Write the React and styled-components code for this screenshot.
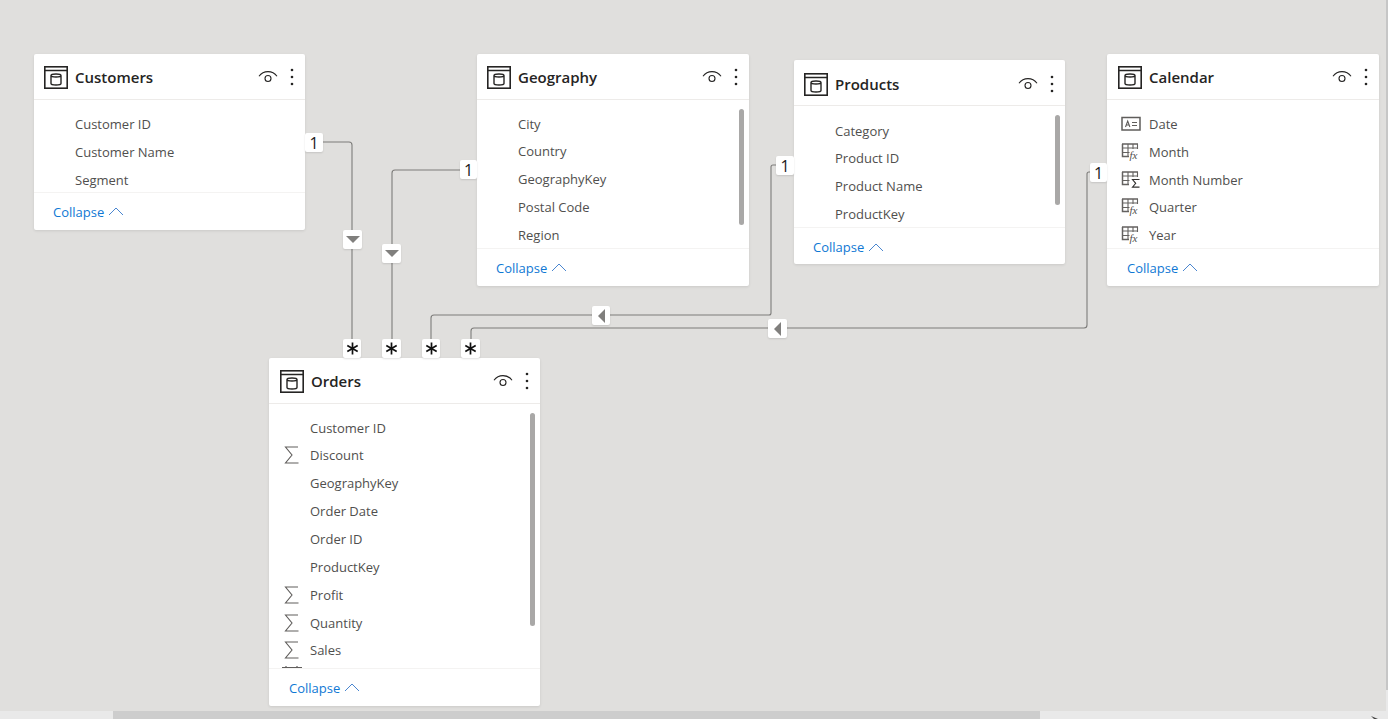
import React from "react";
import styled, { createGlobalStyle } from "styled-components";

const GlobalStyle = createGlobalStyle`
  html, body {
    margin: 0;
    padding: 0;
    overflow: hidden;
    background: #e0dfdd;
    font-family: "Open Sans", "Noto Sans", sans-serif;
  }
`;

const Page = styled.div`
  width: 1388px;
  height: 719px;
  display: flex;
  flex-direction: column;
  overflow: hidden;
`;

const Main = styled.div`
  flex: 1;
  display: flex;
  min-height: 0;
`;

const Canvas = styled.div`
  position: relative;
  flex: 1;
  background: #e0dfdd;
`;

const VScroll = styled.div`
  width: 2px;
  background: #e9e9e9;
  i {
    display: block;
    height: 690px;
    background: #c6c6c6;
  }
`;

const HScroll = styled.div`
  position: relative;
  height: 8px;
  background: #e9e9e9;
  padding-left: 113px;
  i {
    display: block;
    width: 927px;
    height: 8px;
    background: #cdcdcd;
  }
  svg {
    position: absolute;
    right: 10px;
    top: 5px;
  }
`;

const Lines = styled.svg`
  position: absolute;
  left: 0;
  top: 0;
  width: 1386px;
  height: 711px;
  fill: none;
  stroke: #7d7c7a;
  stroke-width: 1.1;
`;

const Card = styled.div`
  position: absolute;
  left: ${p => p.$x}px;
  top: ${p => p.$y}px;
  width: ${p => p.$w}px;
  height: ${p => p.$h}px;
  background: #fff;
  border-radius: 2px;
  box-shadow: 0 1px 3px rgba(0, 0, 0, 0.1);
  display: flex;
  flex-direction: column;
  overflow: hidden;
`;

const Header = styled.div`
  height: ${p => 44 - p.$drop}px;
  flex: none;
  display: flex;
  align-items: center;
  padding: ${p => 1 + p.$drop}px 8px 0 ${p => 10 + p.$inset}px;
  border-bottom: 1px solid #edebe9;
`;

const Title = styled.div`
  flex: 1;
  margin-left: 7px;
  font-size: 15px;
  font-weight: 600;
  color: #252423;
`;

const HeaderIcon = styled.svg`
  flex: none;
  display: block;
`;

const MoreDots = styled(HeaderIcon)`
  margin: 0 3px 0 12px;
`;

const Body = styled.div`
  position: relative;
  flex: 1;
  min-height: 0;
  overflow: hidden;
  padding-top: ${p => p.$pad}px;
`;

const Row = styled.div`
  height: 27.85px;
  display: flex;
  align-items: center;
  font-size: 13px;
  color: #504f4e;
  white-space: nowrap;
`;

const RowIcon = styled.div`
  width: ${p => 41 + p.$inset}px;
  flex: none;
  padding-left: ${p => 13 + p.$inset}px;
  box-sizing: border-box;
  svg {
    display: block;
  }
`;

const Thumb = styled.div`
  position: absolute;
  right: 5px;
  top: ${p => p.$top}px;
  width: 5px;
  height: ${p => p.$h}px;
  border-radius: 3px;
  background: #a9a8a7;
`;

const Footer = styled.div`
  height: ${p => 37 - p.$drop * 3}px;
  flex: none;
  display: flex;
  align-items: center;
  gap: 4px;
  padding: ${p => p.$drop * 2}px 0 0 ${p => 19 + p.$inset}px;
  border-top: 1px solid #f4f3f2;
  color: #0f78d4;
  font-size: 13px;
`;

const Tag = styled.div`
  position: absolute;
  left: ${p => p.$x}px;
  top: ${p => p.$y}px;
  width: ${p => p.$w || 18}px;
  height: 19px;
  background: #fff;
  border-radius: 2px;
  box-shadow: 0 1px 2px rgba(0, 0, 0, 0.12);
  display: flex;
  align-items: center;
  justify-content: center;
  font-size: 16px;
  font-weight: 500;
  color: #1b1a19;
  line-height: 1;
`;

const TableIcon = () => (
  <HeaderIcon width="24" height="23" viewBox="0 0 24 23" fill="none" stroke="#252423">
    <rect x="0.8" y="0.8" width="22.4" height="21.4" strokeWidth="1.6" />
    <path d="M1 4.500h22" strokeWidth="1.3" />
    <path d="M7 9.500c0-2 10-2 10 0v8c0 2-10 2-10 0zM7 9.500c0 2 10 2 10 0" strokeWidth="1.4" />
  </HeaderIcon>
);

const EyeIcon = () => (
  <HeaderIcon width="20" height="14" viewBox="0 0 20 14" fill="none" stroke="#252423" strokeWidth="1.1">
    <path d="M1 6.300C5.500 0 14.500 0 19 6.300" />
    <circle cx="10" cy="8.500" r="3" />
  </HeaderIcon>
);

const MoreIcon = () => (
  <MoreDots width="4" height="18" viewBox="0 0 4 18" fill="#252423">
    <circle cx="2" cy="2" r="1.300" />
    <circle cx="2" cy="9" r="1.300" />
    <circle cx="2" cy="16" r="1.300" />
  </MoreDots>
);

const Chevron = () => (
  <svg width="16" height="9" viewBox="0 0 16 9" fill="none" stroke="#4a86d0" strokeWidth="1">
    <path d="M1 8l7-7 7 7" />
  </svg>
);

const SigmaIcon = () => (
  <svg width="20" height="20" viewBox="0 0 20 20" fill="none" stroke="#605e5c" strokeWidth="1.100">
    <path d="M16 2H3.500L10 10l-6.500 8H16.500" />
  </svg>
);

const DateIcon = () => (
  <svg width="20" height="16" viewBox="0 0 20 16" fill="none" stroke="#5f5d5b">
    <rect x="1" y="1.500" width="18" height="12.500" strokeWidth="1.500" />
    <path d="M4.500 11l2.200-6 2.200 6M5.300 9h2.800M11 6.500h5M11 9.500h5" strokeWidth="1.100" />
  </svg>
);

const CalcIcon = ({ kind }) => (
  <svg width="20" height="18" viewBox="0 0 20 18" fill="none" stroke="#646260">
    <path d="M1 1h16M1.500 1v12.500H8" strokeWidth="1.500" />
    <path d="M7 1v12M12 1v5M16.500 1v5M1.500 5h15M1.500 9.500h7" strokeWidth="1.100" />
    {kind === "fx" ? (
      <text x="8.500" y="16" fontSize="11" fontStyle="italic" fontFamily="Liberation Serif, serif" fill="#504f4e" stroke="none">
        fx
      </text>
    ) : (
      <path d="M18.500 8.500h-7l3.200 3.800-3.200 3.800h7" stroke="#323130" strokeWidth="1.100" />
    )}
  </svg>
);

// top edge of the next field's icon, the rest is cut off by the footer
const PeekIcon = () => (
  <svg width="20" height="24" viewBox="0 0 20 24" fill="none" stroke="#605e5c" strokeWidth="1.200">
    <path d="M0 1.500h20M4 0v2M15 0v2" />
  </svg>
);

const rowIcons = {
  sigma: <SigmaIcon />,
  date: <DateIcon />,
  fx: <CalcIcon kind="fx" />,
  sum: <CalcIcon kind="sum" />,
  peek: <PeekIcon />,
};

const tables = [
  {
    name: "Customers",
    x: 34,
    y: 54,
    w: 271,
    h: 176,
    rows: [["Customer ID"], ["Customer Name"], ["Segment"]],
  },
  {
    name: "Geography",
    x: 477,
    y: 54,
    w: 272,
    h: 232,
    pad: 9.6,
    thumb: { top: 9, h: 116 },
    rows: [["City"], ["Country"], ["GeographyKey"], ["Postal Code"], ["Region"]],
  },
  {
    name: "Products",
    x: 794,
    y: 60,
    w: 271,
    h: 204,
    drop: 2,
    pad: 10.6,
    thumb: { top: 9, h: 90 },
    rows: [["Category"], ["Product ID"], ["Product Name"], ["ProductKey"]],
  },
  {
    name: "Calendar",
    x: 1107,
    y: 54,
    w: 272,
    h: 232,
    inset: 1,
    rowInset: 1,
    rows: [["Date", "date"], ["Month", "fx"], ["Month Number", "sum"], ["Quarter", "fx"], ["Year", "fx"]],
  },
  {
    name: "Orders",
    x: 269,
    y: 358,
    w: 271,
    h: 348,
    inset: 1,
    pad: 9.7,
    thumb: { top: 9, h: 213 },
    rows: [
      ["Customer ID"],
      ["Discount", "sigma"],
      ["GeographyKey"],
      ["Order Date"],
      ["Order ID"],
      ["ProductKey"],
      ["Profit", "sigma"],
      ["Quantity", "sigma"],
      ["Sales", "sigma"],
      ["", "peek"],
    ],
  },
];

const ones = [
  [305, 133, 18],
  [460, 160, 17],
  [776, 156, 18],
  [1090, 163, 17],
];

const stars = [
  [343, 18],
  [382, 19],
  [422, 18],
  [461, 19],
];

const TableCard = ({ table }) => {
  const { inset = 0, rowInset = 0, drop = 0, pad = 10 } = table;
  return (
    <Card $x={table.x} $y={table.y} $w={table.w} $h={table.h}>
      <Header $drop={drop} $inset={inset}>
        <TableIcon />
        <Title>{table.name}</Title>
        <EyeIcon />
        <MoreIcon />
      </Header>
      <Body $pad={pad}>
        {table.rows.map(([label, icon]) => (
          <Row key={label || icon}>
            <RowIcon $inset={rowInset}>{icon && rowIcons[icon]}</RowIcon>
            {label}
          </Row>
        ))}
        {table.thumb && <Thumb $top={table.thumb.top} $h={table.thumb.h} />}
      </Body>
      <Footer $drop={drop ? 1 : 0} $inset={inset}>
        Collapse
        <Chevron />
      </Footer>
    </Card>
  );
};

const DownArrow = () => (
  <svg width="14" height="7" viewBox="0 0 14 7" fill="#807f7d">
    <path d="M0 0h14L7 7z" />
  </svg>
);

const LeftArrow = () => (
  <svg width="7" height="14" viewBox="0 0 7 14" fill="#807f7d">
    <path d="M7 0v14L0 7z" />
  </svg>
);

export default function App() {
  return (
    <Page>
      <GlobalStyle />
      <Main>
        <Canvas>
          <Lines viewBox="0 0 1386 711">
            <path d="M305 142H349q3 0 3 3V345" />
            <path d="M465 170H395q-3 0-3 3V345" />
            <path d="M780 165H773q-2 0-2 2V313q0 2-2 2H434q-3 0-3 3V345" />
            <path d="M1095 172H1089q-2 0-2 2V325q0 3-3 3H474q-3 0-3 3V345" />
          </Lines>
          {tables.map(t => (
            <TableCard key={t.name} table={t} />
          ))}
          {ones.map(([x, y, w]) => (
            <Tag key={x} $x={x} $y={y} $w={w}>
              1
            </Tag>
          ))}
          {stars.map(([x, w]) => (
            <Tag key={x} $x={x} $y={339} $w={w}>
              <svg width="13" height="13" viewBox="0 0 13 13" stroke="#111" strokeWidth="1.700">
                <path d="M6.500 0.500v12M1.300 3.500l10.400 6M11.700 3.500l-10.400 6" />
              </svg>
            </Tag>
          ))}
          <Tag $x={343} $y={230} $w={19}>
            <DownArrow />
          </Tag>
          <Tag $x={382} $y={244} $w={19}>
            <DownArrow />
          </Tag>
          <Tag $x={592} $y={306}>
            <LeftArrow />
          </Tag>
          <Tag $x={768} $y={319} $w={19}>
            <LeftArrow />
          </Tag>
        </Canvas>
        <VScroll>
          <i />
        </VScroll>
      </Main>
      <HScroll>
        <i />
        <svg width="7" height="3" viewBox="0 0 7 3" fill="#444">
          <path d="M0 0l7 3H3z" />
        </svg>
      </HScroll>
    </Page>
  );
}
